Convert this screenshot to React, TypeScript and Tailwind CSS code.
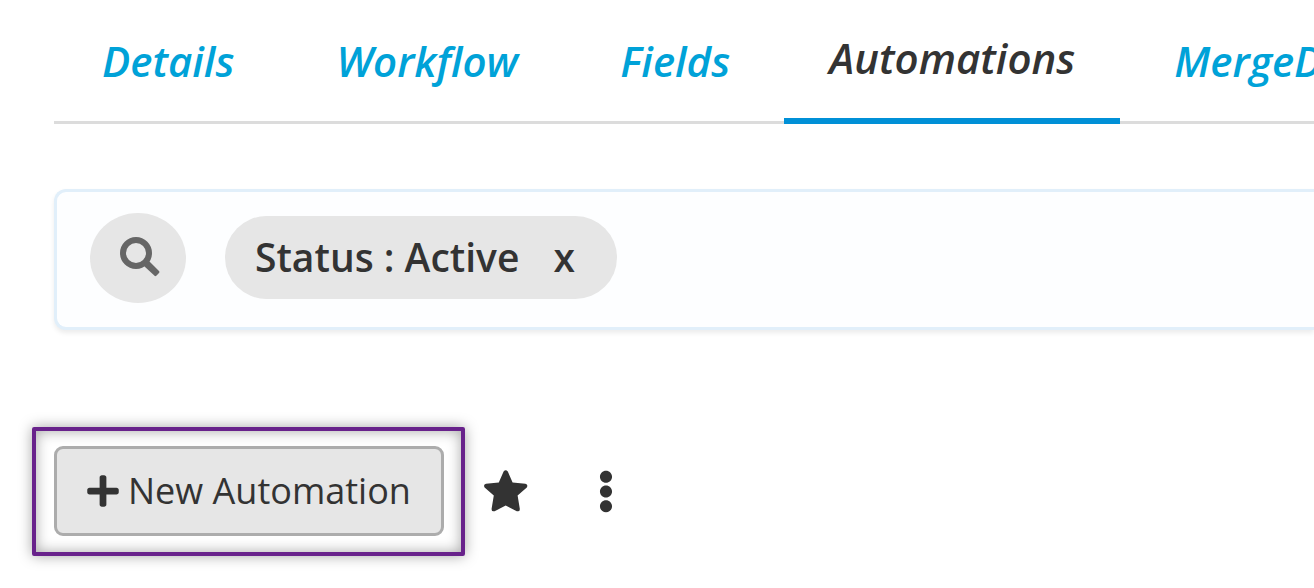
import { FaEllipsisV, FaPlus } from "react-icons/fa";

const tabs = ["Details", "Workflow", "Fields", "Automations", "MergeD"];
const activeTab = "Automations";

function TabBar() {
  return (
    <nav
      aria-label="Sections"
      className="ml-[54px] flex h-[124px] gap-[6px] border-b-3 border-[#dcdcdc] text-[42px] font-semibold italic"
    >
      {tabs.map((tab) =>
        tab === activeTab ? (
          <a
            key={tab}
            href="#"
            aria-current="page"
            className="-mb-[3px] flex shrink-0 items-center border-b-6 border-[#0090d7] px-[45px] pb-1 text-[#333333]"
          >
            {tab}
          </a>
        ) : (
          <a key={tab} href="#" className="flex shrink-0 items-center px-12 text-[#00a2d8]">
            {tab}
          </a>
        ),
      )}
    </nav>
  );
}

function SearchIcon() {
  return (
    <svg viewBox="0 0 44 42" className="h-[42px] w-11" fill="none" stroke="currentColor" aria-hidden="true">
      <circle cx="20" cy="16" r="13" strokeWidth="6" />
      <path
        d="M33.5 24.5 L43 34 Q44 35 43 36 L40.3 38.7 Q39.3 39.6 38.3 38.6 L28.5 29.5 L29 25 Z"
        fill="currentColor"
        stroke="none"
      />
    </svg>
  );
}

function StarIcon() {
  return (
    <svg viewBox="0 0 46 43" className="h-[43px] w-[46px]" fill="currentColor" aria-hidden="true">
      <path d="M20.6 1.6 Q22.7 -0.9 24.8 1.6 L29.6 12.4 L42.4 13.8 Q45.4 14.6 43.8 17.6 L34.6 25.6 L36.8 38.8 Q37 42 33.8 41.2 L22.7 35.6 L11.6 41.2 Q8.4 42 8.6 38.8 L10.8 25.6 L1.6 17.6 Q0 14.6 3 13.8 L15.8 12.4 Z" />
    </svg>
  );
}

function FilterBar() {
  return (
    <section
      aria-label="Filters"
      className="mt-[65px] ml-[54px] flex h-[141px] items-center gap-[39px] rounded-l-[12px] border-3 border-r-0 border-[#e1effa] bg-[#fdfeff] pb-1 pl-[33px] shadow-[0_3px_5px_rgba(0,0,0,0.08)]"
    >
      <button
        type="button"
        aria-label="Search"
        className="flex h-[90px] w-[96px] items-center justify-center rounded-[50%] bg-[#e6e6e6] text-[#666666]"
      >
        <SearchIcon />
      </button>
      <div className="flex h-[83px] items-center gap-[34px] rounded-full bg-[#e6e6e6] pr-[42px] pl-[30px] text-[39px] font-semibold">
        <span>Status : Active</span>
        <button type="button" aria-label="Remove filter">
          x
        </button>
      </div>
    </section>
  );
}

function Actions() {
  return (
    <div className="mt-[97px] ml-8 flex items-center">
      <div className="rounded-xs border-4 border-[#68228b] pt-[15px] pr-[17px] pb-4 pl-[18px] shadow-[0_0_14px_rgba(0,0,0,0.35),inset_0_0_14px_rgba(0,0,0,0.35)]">
        <button
          type="button"
          className="flex h-[90px] items-center gap-[9px] rounded-[9px] border-3 border-[#acacac] bg-[#e6e6e6] px-[30px] text-[36px]"
        >
          <FaPlus className="h-[36px] w-[32px]" />
          New Automation
        </button>
      </div>
      <button type="button" aria-label="Favorite" className="ml-[18px]">
        <StarIcon />
      </button>
      <button type="button" aria-label="More actions" className="ml-[68px]">
        <FaEllipsisV className="h-[43px] w-[18px]" />
      </button>
    </div>
  );
}

export default function App() {
  return (
    <main className="overflow-hidden bg-white pb-8 font-['Open_Sans',sans-serif] text-[#333333]">
      <TabBar />
      <FilterBar />
      <Actions />
    </main>
  );
}
